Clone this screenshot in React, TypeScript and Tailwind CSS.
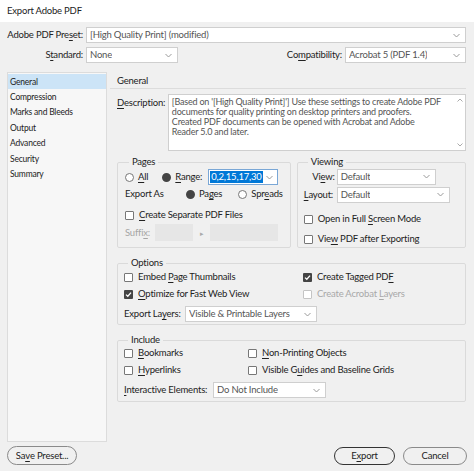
import React from "react";

const font = { fontFamily: 'Lato, "Liberation Sans", Arial, sans-serif' };

function Chevron() {
  return (
    <svg width="7" height="5" viewBox="0 0 7 5" className="shrink-0">
      <path d="M0.5 1 L3.5 4 L6.5 1" fill="none" stroke="#9a9a9a" strokeWidth="1" />
    </svg>
  );
}

function Select({ value, className }: { value: string; className: string }) {
  return (
    <div className={`h-[16px] bg-white border border-[#cfcfcf] flex items-center justify-between pl-[3px] pr-[5px] text-[#555] ${className}`}>
      <span className="truncate">{value}</span>
      <Chevron />
    </div>
  );
}

function Check({ checked, disabled, children }: { checked?: boolean; disabled?: boolean; children: React.ReactNode }) {
  return (
    <div className={`flex items-center gap-[5px] whitespace-nowrap ${disabled ? "text-[#a8a8a8]" : "text-[#222]"}`}>
      {checked ? (
        <div className="w-[9px] h-[9px] rounded-[1px] bg-[#444] flex items-center justify-center">
          <svg width="7" height="7" viewBox="0 0 7 7">
            <path d="M1 3.6 L2.8 5.3 L6 1.6" fill="none" stroke="#fff" strokeWidth="1.3" />
          </svg>
        </div>
      ) : (
        <div className={`w-[9px] h-[9px] rounded-[1px] border ${disabled ? "border-[#c4c4c4]" : "border-[#777]"} bg-white`} />
      )}
      <span>{children}</span>
    </div>
  );
}

function Radio({ checked, children }: { checked?: boolean; children: React.ReactNode }) {
  return (
    <div className="flex items-center gap-[4px] text-[#222] whitespace-nowrap">
      {checked ? (
        <div className="w-[9px] h-[9px] rounded-full border-[3px] border-[#444] bg-[#444]" />
      ) : (
        <div className="w-[9px] h-[9px] rounded-full border border-[#777] bg-white" />
      )}
      <span>{children}</span>
    </div>
  );
}

function U({ children }: { children: React.ReactNode }) {
  return <span className="underline underline-offset-2">{children}</span>;
}

function Group({ title, className, children }: { title: string; className: string; children: React.ReactNode }) {
  return (
    <fieldset className={`border border-[#dadada] rounded-[2px] ${className}`}>
      <legend className="ml-[4px] px-[3px] text-[#222] leading-[12px]">{title}</legend>
      {children}
    </fieldset>
  );
}

const sections = ["General", "Compression", "Marks and Bleeds", "Output", "Advanced", "Security", "Summary"];

const description = [
  "[Based on '[High Quality Print]'] Use these settings to create Adobe PDF",
  "documents for quality printing on desktop printers and proofers.",
  "Created PDF documents can be opened with Acrobat and Adobe",
  "Reader 5.0 and later.",
];

export default function App() {
  return (
    <div className="w-[474px] h-[474px] bg-white text-[9.5px] tracking-[-0.2px] leading-[12px] text-[#222] flex flex-col whitespace-nowrap" style={font}>
      {/* title */}
      <div className="h-[22px] flex items-center pl-[7px] text-[#222]">Export Adobe PDF</div>

      <div className="h-[449px] bg-[#f0f0f0] flex flex-col">
        {/* preset rows */}
        <div className="mt-[5px] flex items-center h-[16px]">
          <div className="w-[83px] text-right">Adobe PDF Pre<U>s</U>et:</div>
          <Select value="[High Quality Print] (modified)" className="ml-[3px] w-[380px]" />
        </div>
        <div className="mt-[4px] flex items-center h-[16px]">
          <div className="w-[83px] text-right">S<U>t</U>andard:</div>
          <Select value="None" className="ml-[3px] w-[92px]" />
          <div className="ml-auto mr-[3px]">Co<U>m</U>patibility:</div>
          <Select value="Acrobat 5 (PDF 1.4)" className="mr-[8px] w-[121px]" />
        </div>

        {/* main */}
        <div className="mt-[9px] flex">
          <div className="ml-[7px] w-[100px] h-[370px] bg-[#f7f7f7] border border-[#dcdcdc] pt-[1px]">
            {sections.map((s, i) => (
              <div key={s} className={`h-[15.4px] flex items-center pl-[2px] text-[8.5px] ${i === 0 ? "bg-[#cce4f7]" : ""}`}>
                {s}
              </div>
            ))}
          </div>

          <div className="ml-[3px] w-[356px] flex flex-col">
            <div className="h-[16px] mt-[1px] flex items-center pl-[7px] border-b border-[#dcdcdc]">General</div>

            <div className="mt-[5px] flex">
              <div className="w-[58px] pl-[7px] pt-[3px]"><U>D</U>escription:</div>
              <div className="w-[299px] h-[57px] bg-white border border-[#cfcfcf] flex">
                <div className="flex-1 pl-[3px] pt-[2px] text-[#555] leading-[10px] text-[9px]">
                  {description.map((l) => (
                    <div key={l}>{l}</div>
                  ))}
                </div>
                <div className="w-[10px] flex flex-col justify-between items-center py-[3px] text-[#aaa]">
                  <svg width="6" height="4" viewBox="0 0 6 4"><path d="M0.5 3.5 L3 1 L5.5 3.5" fill="none" stroke="#aaa" /></svg>
                  <svg width="6" height="4" viewBox="0 0 6 4"><path d="M0.5 0.5 L3 3 L5.5 0.5" fill="none" stroke="#aaa" /></svg>
                </div>
              </div>
            </div>

            {/* pages / viewing */}
            <div className="mt-[5px] flex ml-[7px] gap-[6px]">
              <Group title="Pages" className="w-[172px] h-[92px] px-[7px]">
                <div className="flex items-center h-[16px] mt-[1px]">
                  <Radio><U>A</U>ll</Radio>
                  <div className="ml-[14px]"><Radio checked><U>R</U>ange:</Radio></div>
                  <div className="ml-[6px] w-[70px] h-[16px] bg-white border border-[#7aa7d6] flex items-center justify-between pl-[1px] pr-[4px]">
                    <span className="bg-[#0078d7] text-white px-[1px] leading-[12px]">0,2,15,17,30</span>
                    <Chevron />
                  </div>
                </div>
                <div className="flex items-center h-[16px] mt-[1px]">
                  <div className="w-[61px]">Export As</div>
                  <Radio checked>Pa<U>g</U>es</Radio>
                  <div className="ml-[16px]"><Radio>Spr<U>e</U>ads</Radio></div>
                </div>
                <div className="mt-[7px]">
                  <Check><U>C</U>reate Separate PDF Files</Check>
                </div>
                <div className="flex items-center h-[17px] mt-[3px] text-[#a5a5a5]">
                  <div className="w-[30px]">Suffi<U>x</U>:</div>
                  <div className="w-[38px] h-[17px] bg-[#e6e6e6]" />
                  <div className="w-[17px] flex justify-center text-[7px] text-[#aaa]">▸</div>
                  <div className="w-[68px] h-[17px] bg-[#e6e6e6]" />
                </div>
              </Group>
              <Group title="Viewing" className="w-[171px] h-[92px] px-[6px]">
                <div className="flex items-center h-[15px] mt-[1px]">
                  <div className="w-[31px] text-right">Vi<U>e</U>w:</div>
                  <Select value="Default" className="ml-[2px] w-[99px] h-[15px]" />
                </div>
                <div className="flex items-center h-[15px] mt-[3px]">
                  <div className="w-[31px]"><U>L</U>ayout:</div>
                  <Select value="Default" className="ml-[2px] w-[113px] h-[15px]" />
                </div>
                <div className="mt-[11px]">
                  <Check>Open in Full <U>S</U>creen Mode</Check>
                </div>
                <div className="mt-[8px]">
                  <Check>Vie<U>w</U> PDF after Exporting</Check>
                </div>
              </Group>
            </div>

            {/* options */}
            <Group title="Options" className="mt-[9px] ml-[7px] w-[349px] h-[68px] px-[6px]">
              <div className="flex mt-[2px]">
                <div className="w-[179px] flex flex-col gap-[5px]">
                  <Check>Embed <U>P</U>age Thumbnails</Check>
                  <Check checked><U>O</U>ptimize for Fast Web View</Check>
                </div>
                <div className="flex flex-col gap-[5px]">
                  <Check checked>Create Tagged PD<U>F</U></Check>
                  <Check disabled>Create Acrobat <U>L</U>ayers</Check>
                </div>
              </div>
              <div className="flex items-center mt-[6px]">
                <div className="w-[61px]">Export La<U>y</U>ers:</div>
                <Select value="Visible & Printable Layers" className="w-[132px] h-[15px]" />
              </div>
            </Group>

            {/* include */}
            <Group title="Include" className="mt-[9px] ml-[7px] w-[349px] h-[68px] px-[6px]">
              <div className="flex mt-[1px]">
                <div className="w-[124px] flex flex-col gap-[5px]">
                  <Check><U>B</U>ookmarks</Check>
                  <Check><U>H</U>yperlinks</Check>
                </div>
                <div className="flex flex-col gap-[5px]">
                  <Check><U>N</U>on-Printing Objects</Check>
                  <Check>Visible G<U>u</U>ides and Baseline Grids</Check>
                </div>
              </div>
              <div className="flex items-center mt-[6px]">
                <div className="w-[89px]"><U>I</U>nteractive Elements:</div>
                <Select value="Do Not Include" className="w-[113px] h-[15px]" />
              </div>
            </Group>
          </div>
        </div>

        {/* buttons */}
        <div className="mt-[4px] flex items-center px-[7px]">
          <div className="w-[70px] h-[19px] rounded-full border border-[#8a8a8a] flex items-center justify-center">Sa<U>v</U>e Preset...</div>
          <div className="ml-auto w-[61px] h-[18px] rounded-full border-[1.5px] border-[#333] flex items-center justify-center">E<U>x</U>port</div>
          <div className="ml-[8px] w-[64px] h-[18px] rounded-full border border-[#8a8a8a] flex items-center justify-center">Cancel</div>
        </div>
      </div>
    </div>
  );
}
